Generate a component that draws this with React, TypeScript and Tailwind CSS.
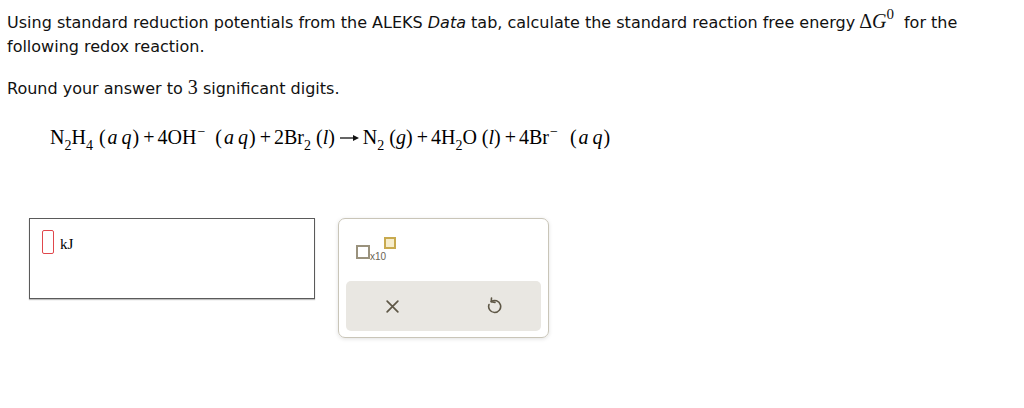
import React from "react";

const serif = { fontFamily: '"Liberation Serif", "Times New Roman", serif' };

function T({ ml = 0, children, it = false }: { ml?: number; children: React.ReactNode; it?: boolean }) {
  return (
    <span className={it ? "italic" : ""} style={{ marginLeft: ml }}>
      {children}
    </span>
  );
}

function Sb({ ml = 0, children }: { ml?: number; children: React.ReactNode }) {
  return (
    <span className="text-[14px] relative top-[6px]" style={{ marginLeft: ml }}>
      {children}
    </span>
  );
}

function Sp({ ml = 0 }: { ml?: number }) {
  return (
    <span className="text-[14px] relative -top-[8px]" style={{ marginLeft: ml }}>
      −
    </span>
  );
}

function AQ({ ml = 0 }: { ml?: number }) {
  return (
    <>
      <T ml={ml}>(</T>
      <T it ml={2}>a</T>
      <T it ml={4}>q</T>
      <T ml={1}>)</T>
    </>
  );
}

function Plus() {
  return <span className="ml-[4px] mr-[3px]">+</span>;
}

function Arrow({ ml = 0 }: { ml?: number }) {
  return (
    <svg width="20" height="8" viewBox="0 0 20 8" className="self-center relative top-[1px]" style={{ marginLeft: ml }}>
      <path d="M0 4 H14" stroke="#111" strokeWidth="1.3" />
      <path d="M13 1 L19 4 L13 7 Z" fill="#111" />
    </svg>
  );
}

export default function App() {
  return (
    <div
      className="w-[1024px] h-[408px] bg-white text-black relative overflow-hidden"
      style={{ fontFamily: '"DejaVu Sans", Verdana, sans-serif' }}
    >
      <div className="pl-[7px] pt-[9px] text-[16px] leading-[24px] text-[#111]">
        <p className="whitespace-nowrap">
          Using standard reduction potentials from the ALEKS <i>Data</i> tab, calculate the standard reaction free energy
          <span className="text-[20px] ml-[4px]" style={serif}>
            Δ<i>G</i>
            <span className="text-[15px] relative -top-[9px]">0</span>
          </span>
          <span className="ml-[10px]">for the</span>
          <br />
          following redox reaction.
        </p>
        <p className="mt-[16px]">
          Round your answer to <span className="text-[20px]" style={serif}>3</span> significant digits.
        </p>
      </div>

      <div
        className="pl-[50px] mt-[20px] h-[32px] text-[20px] leading-[32px] whitespace-nowrap flex items-baseline"
        style={serif}
      >
        <T>N</T>
        <Sb>2</Sb>
        <T>H</T>
        <Sb>4</Sb>
        <AQ ml={6} />
        <Plus />
        <T>4OH</T>
        <Sp ml={1} />
        <AQ ml={10} />
        <Plus />
        <T>2Br</T>
        <Sb>2</Sb>
        <T ml={5}>(</T>
        <T it>l</T>
        <T>)</T>
        <Arrow ml={5} />
        <T ml={3}>N</T>
        <Sb>2</Sb>
        <T ml={5}>(</T>
        <T it>g</T>
        <T>)</T>
        <Plus />
        <T>4H</T>
        <Sb>2</Sb>
        <T>O</T>
        <T ml={5}>(</T>
        <T it>l</T>
        <T>)</T>
        <Plus />
        <T>4Br</T>
        <Sp ml={1} />
        <AQ ml={12} />
      </div>

      <div className="flex items-start gap-[23px] pl-[29px] mt-[65px]">
        <div className="w-[286px] h-[81px] border border-[#5a5a5a] shadow-[0_1px_1px_rgba(0,0,0,0.25)] pt-[11px] pl-[12px] flex items-start gap-[6px]">
          <div className="w-[12px] h-[24px] border border-[#e0474c] rounded-[2px]" />
          <span className="text-[15px] mt-[3px]" style={serif}>
            kJ
          </span>
        </div>

        <div className="w-[211px] h-[120px] rounded-[7px] border border-[#c9c5b8] shadow-[0_1px_4px_rgba(0,0,0,0.12)] px-[7px] pt-[17px] pb-[6px] flex flex-col">
          <div className="h-[45px] relative">
            <div className="absolute left-[10px] top-[9px] w-[14px] h-[14px] border-2 border-[#9a927d] bg-white" />
            <span
              className="absolute left-[24px] top-[13px] text-[10px] text-[#6b6454]"
              style={{ fontFamily: '"Liberation Sans", Arial, sans-serif' }}
            >
              x10
            </span>
            <div className="absolute left-[38px] top-[1px] w-[12px] h-[12px] border-2 border-[#c8aa4f] bg-[#f6edcc]" />
          </div>
          <div className="flex-1 bg-[#e9e7e2] rounded-[5px] flex items-center">
            <div className="w-1/2 flex justify-center pr-[5px]">
              <svg width="15" height="15" viewBox="0 0 14 14">
                <path d="M2 2 L12 12 M12 2 L2 12" stroke="#5e5746" strokeWidth="1.6" strokeLinecap="round" />
              </svg>
            </div>
            <div className="w-1/2 flex justify-center pl-[3px]">
              <svg width="16" height="18" viewBox="0 0 16 18" fill="none">
                <path d="M5.2 4.6 A6 6 0 1 1 3 7.5" stroke="#5e5746" strokeWidth="1.6" strokeLinecap="round" />
                <path d="M5.5 1 L5.2 4.8 L9 5.4" stroke="#5e5746" strokeWidth="1.6" strokeLinecap="round" strokeLinejoin="round" />
              </svg>
            </div>
          </div>
        </div>
      </div>
    </div>
  );
}
